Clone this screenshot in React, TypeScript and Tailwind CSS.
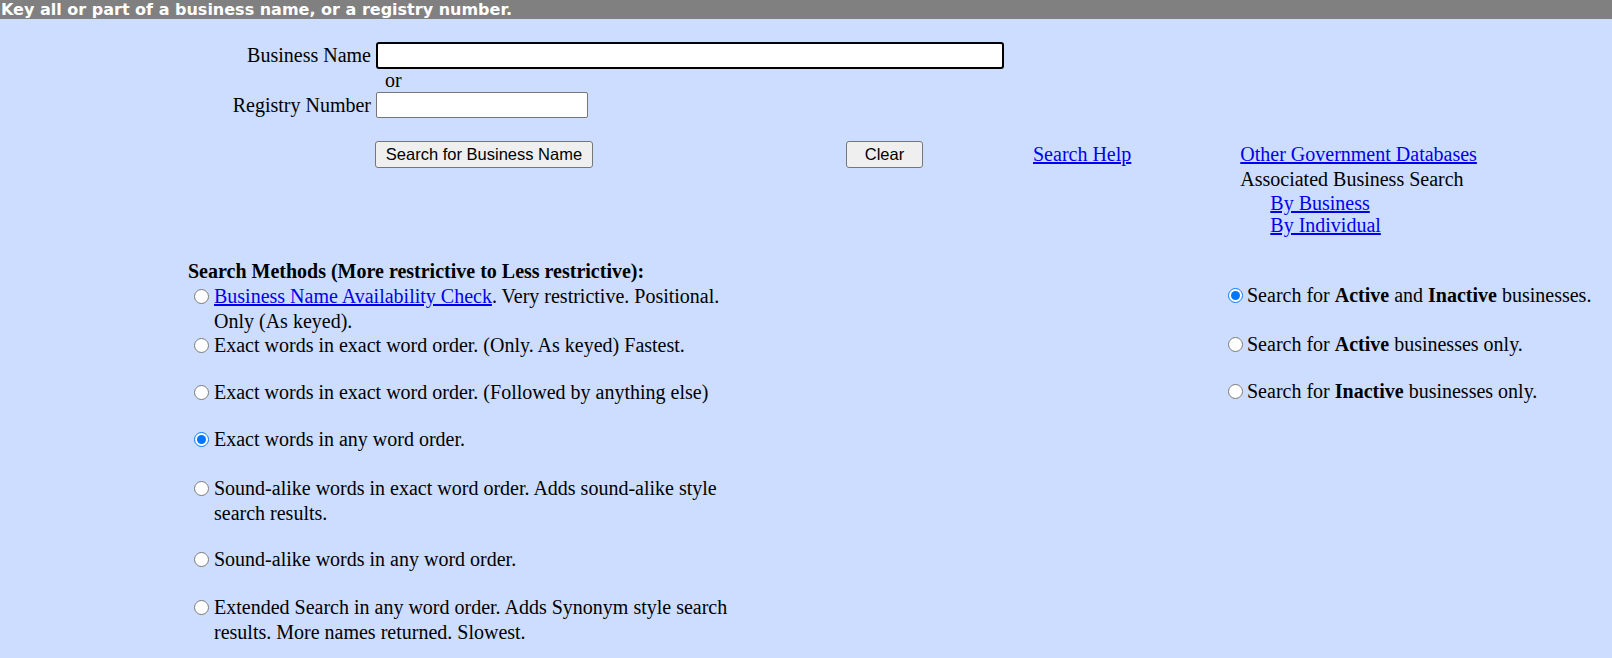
import React from 'react'

const serif = { fontFamily: '"Liberation Serif", "Times New Roman", serif' }
const sans = { fontFamily: '"Liberation Sans", Arial, sans-serif' }

function Radio({ checked = false }: { checked?: boolean }) {
  return (
    <input
      type="radio"
      defaultChecked={checked}
      className="m-0 h-[15px] w-[15px] shrink-0"
    />
  )
}

function MethodItem({
  checked,
  className = '',
  children,
}: {
  checked?: boolean
  className?: string
  children: React.ReactNode
}) {
  return (
    <div className={`flex items-start ${className}`}>
      <div className="ml-[6px] mr-[5px] flex h-[25px] items-center">
        <Radio checked={checked} />
      </div>
      <div className="w-[522px]">{children}</div>
    </div>
  )
}

function StatusItem({
  checked,
  className = '',
  children,
}: {
  checked?: boolean
  className?: string
  children: React.ReactNode
}) {
  return (
    <div className={`flex items-start ${className}`}>
      <div className="mr-[4px] flex h-[25px] items-center">
        <Radio checked={checked} />
      </div>
      <div>{children}</div>
    </div>
  )
}

const link = 'text-[#0000ee] underline'

export default function App() {
  return (
    <div
      className="min-h-[658px] bg-[#ccddff] text-[20px] leading-[25px] text-black"
      style={serif}
    >
      <div
        className="h-[19px] bg-[#808080] pl-[1px] text-[16px] font-bold leading-[19px] text-white"
        style={{ fontFamily: '"DejaVu Sans", Verdana, sans-serif' }}
      >
        Key all or part of a business name, or a registry number.
      </div>

      {/* name / number inputs */}
      <div className="pt-[23px]">
        <div className="flex items-center">
          <label className="w-[371px] text-right">Business Name</label>
          <input
            type="text"
            className="ml-[5px] h-[27px] w-[628px] rounded-[3px] border-2 border-black bg-white outline-none"
          />
        </div>
        <div className="h-[23px] pl-[385px] leading-[23px]">or</div>
        <div className="flex items-center">
          <label className="w-[371px] text-right">Registry Number</label>
          <input
            type="text"
            className="ml-[5px] h-[26px] w-[212px] rounded-[2px] border border-[#767676] bg-white outline-none"
          />
        </div>
      </div>

      {/* buttons + links */}
      <div className="mt-[23px] flex items-start">
        <button
          className="ml-[375px] h-[27px] w-[218px] rounded-[3px] border border-[#767676] bg-[#efefef] text-[16.5px] leading-none"
          style={sans}
        >
          Search for Business Name
        </button>
        <button
          className="ml-[253px] h-[27px] w-[77px] rounded-[3px] border border-[#767676] bg-[#efefef] text-[16.5px] leading-none"
          style={sans}
        >
          Clear
        </button>
        <a href="#" className={`ml-[110px] mt-[1px] ${link}`}>
          Search Help
        </a>
        <div className="ml-[109px] mt-[1px] flex flex-col">
          <a href="#" className={link}>
            Other Government Databases
          </a>
          <div>Associated Business Search</div>
          <a href="#" className={`ml-[30px] leading-[22px] ${link}`}>
            By Business
          </a>
          <a href="#" className={`ml-[30px] leading-[22px] ${link}`}>
            By Individual
          </a>
        </div>
      </div>

      {/* search methods */}
      <div className="mt-[23px] flex pl-[188px]">
        <div className="w-[1040px]">
          <div className="font-bold">Search Methods (More restrictive to Less restrictive):</div>
          <MethodItem>
            <a href="#" className={link}>
              Business Name Availability Check
            </a>
            . Very restrictive. Positional. Only (As keyed).
          </MethodItem>
          <MethodItem className="-mt-px">
            Exact words in exact word order. (Only. As keyed) Fastest.
          </MethodItem>
          <MethodItem className="mt-[22px]">
            Exact words in exact word order. (Followed by anything else)
          </MethodItem>
          <MethodItem checked className="mt-[22px]">
            Exact words in any word order.
          </MethodItem>
          <MethodItem className="mt-[24px]">
            Sound-alike words in exact word order. Adds sound-alike style search results.
          </MethodItem>
          <MethodItem className="mt-[21px]">Sound-alike words in any word order.</MethodItem>
          <MethodItem className="mt-[23px]">
            Extended Search in any word order. Adds Synonym style search results. More names
            returned. Slowest.
          </MethodItem>
        </div>
        <div className="pt-[24px]">
          <StatusItem checked>
            Search for <b>Active</b> and <b>Inactive</b> businesses.
          </StatusItem>
          <StatusItem className="mt-[24px]">
            Search for <b>Active</b> businesses only.
          </StatusItem>
          <StatusItem className="mt-[22px]">
            Search for <b>Inactive</b> businesses only.
          </StatusItem>
        </div>
      </div>
    </div>
  )
}
